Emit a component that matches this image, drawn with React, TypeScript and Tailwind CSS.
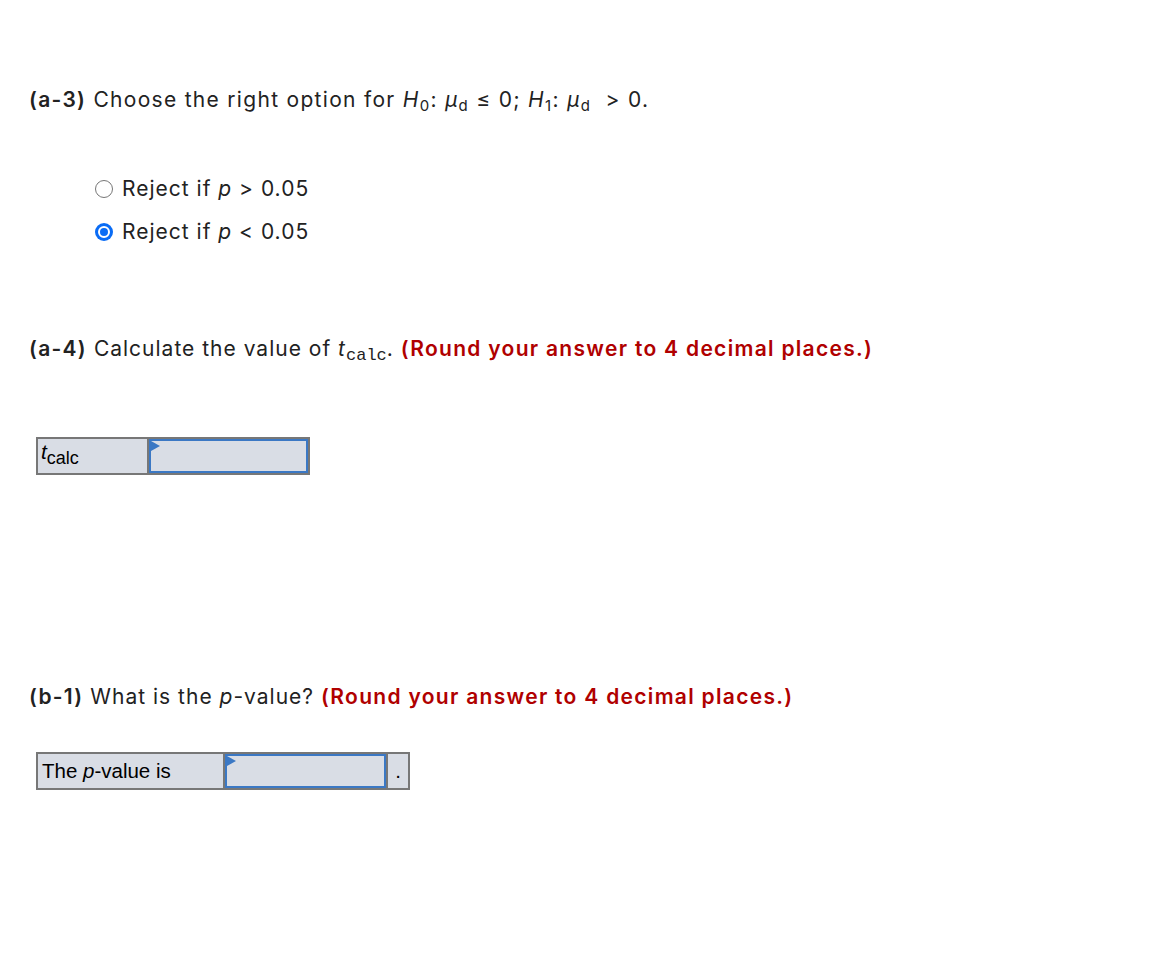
import React from "react";

const font = { fontFamily: "Inter, 'Open Sans', sans-serif" };

const Marker = () => (
  <svg className="absolute left-0 top-0" width="9" height="10" viewBox="0 0 9 10">
    <polygon points="0,0 9,5 0,10" fill="#3b78c4" />
  </svg>
);

const Radio = ({ checked }: { checked?: boolean }) =>
  checked ? (
    <span className="inline-flex w-[18px] h-[18px] rounded-full bg-[#0a6cf5] items-center justify-center">
      <span className="w-[12px] h-[12px] rounded-full border-2 border-white bg-[#0a6cf5]" />
    </span>
  ) : (
    <span className="inline-block w-[18px] h-[18px] rounded-full border border-[#767676] bg-white" />
  );

export default function App() {
  return (
    <div className="bg-white min-h-[968px] w-[1156px] text-[#222] text-[21px] tracking-[1px]" style={font}>
      <div className="pl-[29px] pt-[87px]">
        <p className="leading-[26px] tracking-[1.3px]">
          <b className="font-semibold tracking-[1.3px]">(a-3)</b> Choose the right option for <i>H</i>
          <sub className="text-[15px]">0</sub>: <i>μ</i>
          <sub className="text-[15px]">d</sub> ≤ 0; <i>H</i>
          <sub className="text-[15px]">1</sub>: <i>μ</i>
          <sub className="text-[15px]">d</sub>&nbsp; &gt; 0.
        </p>

        <div className="pl-[66px] pt-[63px] flex flex-col gap-[17px]">
          <label className="flex items-center gap-[9px] leading-[26px]">
            <Radio />
            <span>
              Reject if <i>p</i> &gt; 0.05
            </span>
          </label>
          <label className="flex items-center gap-[9px] leading-[26px]">
            <Radio checked />
            <span>
              Reject if <i>p</i> &lt; 0.05
            </span>
          </label>
        </div>

        <p className="pt-[91px] leading-[26px]">
          <b className="font-semibold tracking-[1.3px]">(a-4)</b> Calculate the value of <i>t</i>
          <sub className="text-[17px] tracking-normal" style={{ fontFamily: "'Liberation Mono', monospace" }}>
            calc
          </sub>
          . <b className="font-semibold tracking-[1.3px] text-[#b00000]">(Round your answer to 4 decimal places.)</b>
        </p>

        <div className="mt-[75px] ml-[7px] flex w-[274px] h-[38px] border-2 border-[#777] bg-[#d9dde5] tracking-normal" style={{ fontFamily: "'Liberation Sans', Arial, sans-serif" }}>
          <div className="w-[111px] border-r-2 border-[#777] pl-[3px] pt-[2px] text-[21px] leading-[22px] text-black">
            <i>t</i>
            <sub className="text-[18px]">calc</sub>
          </div>
          <div className="relative flex-1 border-2 border-[#3b78c4]">
            <Marker />
          </div>
        </div>

        <p className="pt-[209px] leading-[26px]">
          <b className="font-semibold tracking-[1.3px]">(b-1)</b> What is the <i>p</i>-value?{" "}
          <b className="font-semibold tracking-[1.3px] text-[#b00000]">(Round your answer to 4 decimal places.)</b>
        </p>

        <div className="mt-[42px] ml-[7px] flex w-[374px] h-[38px] border-2 border-[#777] bg-[#d9dde5] text-[20.5px] text-black tracking-normal" style={{ fontFamily: "'Liberation Sans', Arial, sans-serif" }}>
          <div className="w-[187px] border-r-2 border-[#777] pl-[4px] flex items-center">
            The&nbsp;<i>p</i>-value is
          </div>
          <div className="relative w-[161px] border-2 border-[#3b78c4]">
            <Marker />
          </div>
          <div className="flex-1 border-l-2 border-[#777] flex items-center justify-center">.</div>
        </div>
      </div>
    </div>
  );
}
